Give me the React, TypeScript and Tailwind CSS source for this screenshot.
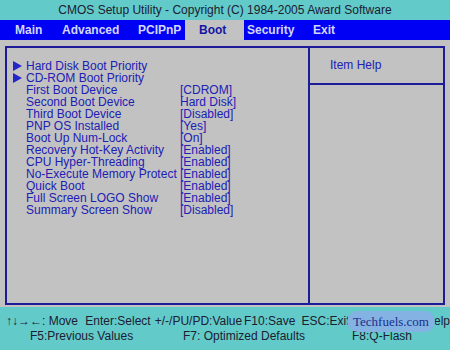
import React from "react";

const items: { label: string; value?: string; sub?: boolean }[] = [
  { label: "Hard Disk Boot Priority", sub: true },
  { label: "CD-ROM Boot Priority", sub: true },
  { label: "First Boot Device", value: "[CDROM]" },
  { label: "Second Boot Device", value: "Hard Disk]" },
  { label: "Third Boot Device", value: "[Disabled]" },
  { label: "PNP OS Installed", value: "[Yes]" },
  { label: "Boot Up Num-Lock", value: "[On]" },
  { label: "Recovery Hot-Key Activity", value: "[Enabled]" },
  { label: "CPU Hyper-Threading", value: "[Enabled]" },
  { label: "No-Execute Memory Protect", value: "[Enabled]" },
  { label: "Quick Boot", value: "[Enabled]" },
  { label: "Full Screen LOGO Show", value: "[Enabled]" },
  { label: "Summary Screen Show", value: "[Disabled]" },
];

function Arrow() {
  return (
    <svg width="10" height="10" viewBox="0 0 10 10" className="block">
      <polygon points="0,0 9,5 0,10" fill="#2424c8" />
    </svg>
  );
}

export default function App() {
  return (
    <div
      className="relative w-[450px] h-[350px] flex flex-col overflow-hidden bg-[#c2c2c2]"
      style={{ fontFamily: '"Liberation Sans", Arial, sans-serif' }}
    >
      {/* Title */}
      <div className="h-[20px] bg-[#63caca] text-[12px] leading-[20px] text-center text-[#1c2030]">
        CMOS Setup Utility - Copyright (C) 1984-2005 Award Software
      </div>

      {/* Menu */}
      <div className="h-[20px] bg-[#0000f4] flex text-[12px] leading-[20px] font-bold text-[#d4d6fa]">
        <div className="w-[62px] pl-[15px]">Main</div>
        <div className="w-[76px]">Advanced</div>
        <div className="w-[47px]">PCIPnP</div>
        <div className="w-[59px] pl-[14px] bg-[#c2c2c2] text-[#1616a4]">Boot</div>
        <div className="w-[69px] pl-[3px]">Security</div>
        <div>Exit</div>
      </div>

      {/* Main panel */}
      <div className="flex-1 pt-[6px] pl-[5px] pr-[5px] pb-[2px]">
        <div className="h-[259px] border-2 border-[#1c1c98] flex">
          <div className="w-[303px] border-r-2 border-[#1c1c98] pt-[12px] text-[12px] leading-[12px] text-[#2020b4]">
            {items.map((it) => (
              <div key={it.label} className="flex h-[12px] items-center">
                <div className="w-[19px] pl-[6px] flex items-center">{it.sub ? <Arrow /> : null}</div>
                <div className="w-[154px] whitespace-nowrap">{it.label}</div>
                <div className="whitespace-nowrap">{it.value}</div>
              </div>
            ))}
          </div>
          <div className="flex-1 flex flex-col">
            <div className="h-[37px] border-b-2 border-[#1c1c98] pl-[20px] pt-[10px] text-[12px] leading-[14px] text-[#2020b4]">
              Item Help
            </div>
            <div className="flex-1" />
          </div>
        </div>
      </div>

      {/* Bottom */}
      <div className="h-[43px] bg-[#63caca] pt-[7px] text-[12px] leading-[15px] text-[#1c2030] whitespace-nowrap">
        <div className="flex">
          <div className="w-[86px] pl-[6px]">↑↓→←: Move</div>
          <div className="w-[70px]">Enter:Select</div>
          <div className="w-[90px]">+/-/PU/PD:Value</div>
          <div className="w-[58px]">F10:Save</div>
          <div className="w-[61px]">ESC:Exit</div>
          <div>F1:General Help</div>
        </div>
        <div className="flex">
          <div className="w-[183px] pl-[30px]">F5:Previous Values</div>
          <div className="w-[169px]">F7: Optimized Defaults</div>
          <div>F8:Q-Flash</div>
        </div>
      </div>

      {/* Watermark */}
      <div
        className="absolute left-[347px] top-[311px] w-[88px] h-[21px] rounded-full bg-[#84b2e2] flex items-center justify-center text-[13px] text-[#1a2f8c]"
        style={{ fontFamily: '"Liberation Serif", "Times New Roman", serif' }}
      >
        Techfuels.com
      </div>
    </div>
  );
}
